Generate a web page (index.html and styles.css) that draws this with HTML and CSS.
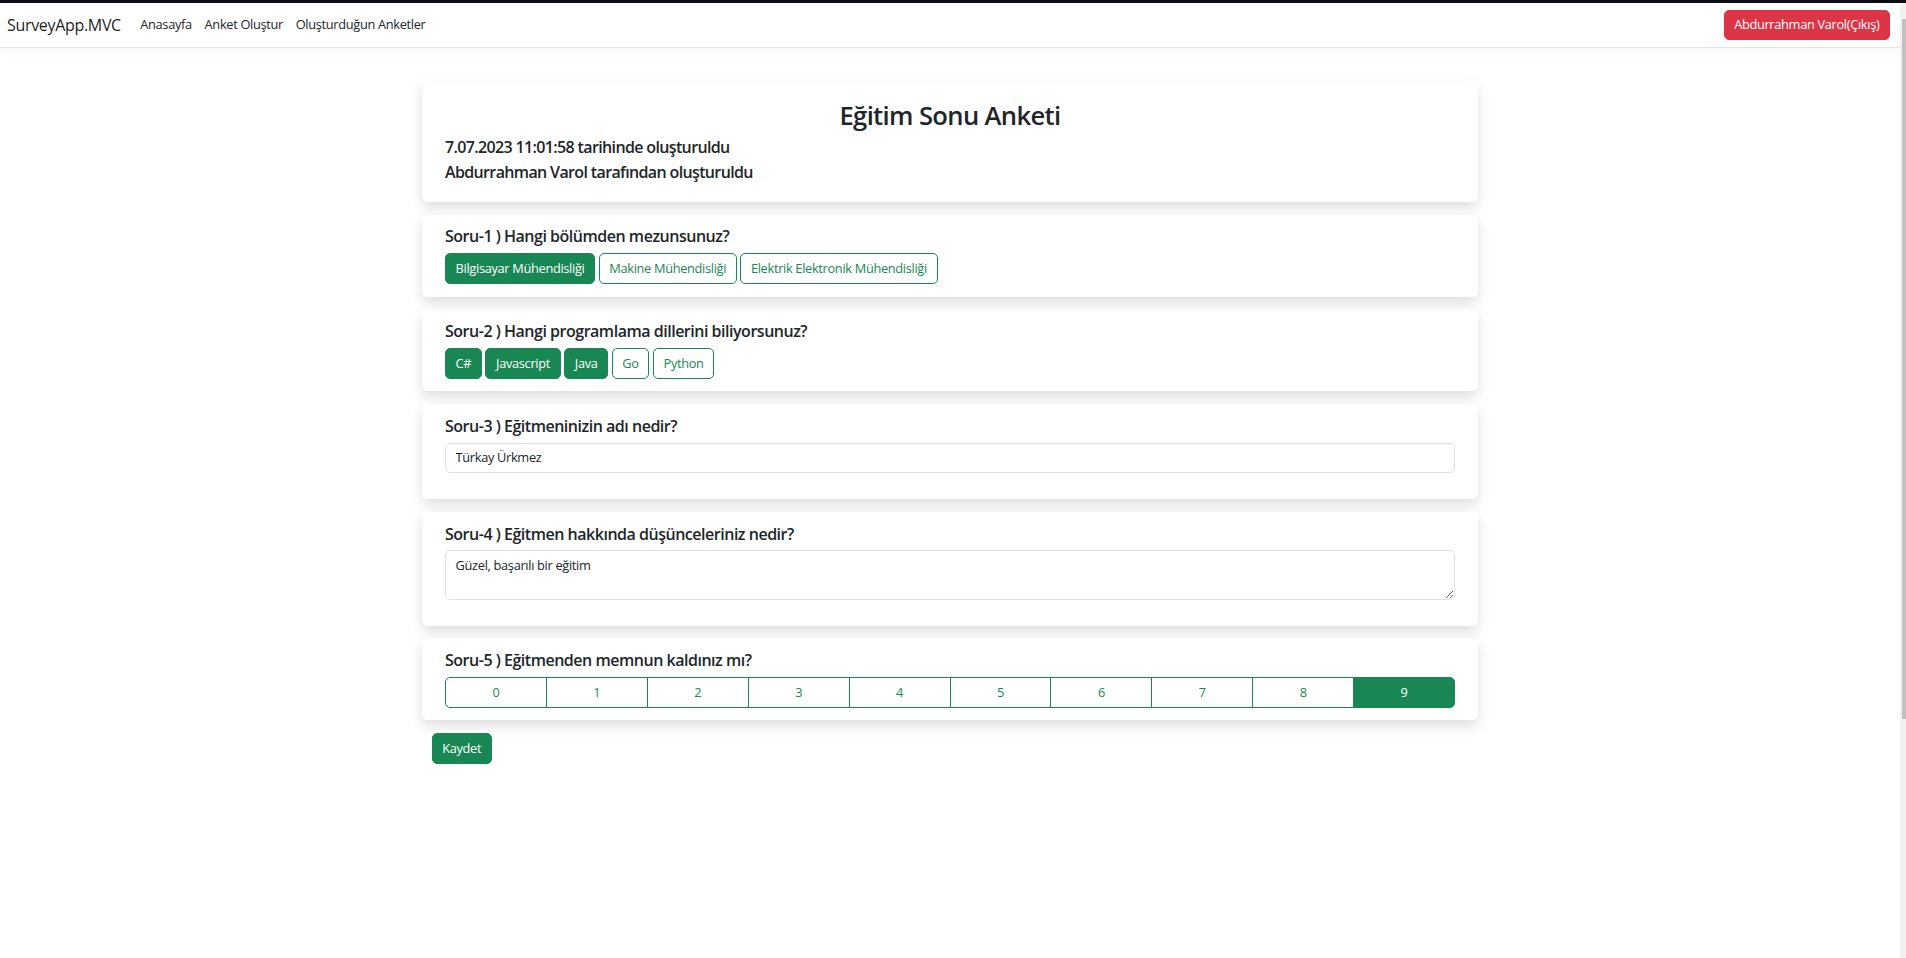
FILE: index.html
```html
<!DOCTYPE html>
<html lang="tr">
<head>
    <meta charset="UTF-8">
    <meta name="viewport" content="width=device-width, initial-scale=1.0">
    <title>Eğitim Sonu Anketi - SurveyApp.MVC</title>

    <link rel="stylesheet" href="styles.css">
</head>
<body>

    <div class="topline"></div>

    <div class="window">
        <div class="page">

            <!-- üst menü -->
            <header class="navbar">
                <a class="navbar-brand" href="#">SurveyApp.MVC</a>
                <nav class="nav-links">
                    <a href="#">Anasayfa</a>
                    <a href="#">Anket Oluştur</a>
                    <a href="#">Oluşturduğun Anketler</a>
                </nav>
                <a class="btn btn-danger logout" href="#">Abdurrahman Varol(Çıkış)</a>
            </header>

            <main class="container">
                <form class="survey">

                    <!-- anket başlığı -->
                    <div class="card card-head">
                        <h2 class="survey-title">Eğitim Sonu Anketi</h2>
                        <h5 class="meta">7.07.2023 11:01:58 tarihinde oluşturuldu</h5>
                        <h5 class="meta">Abdurrahman Varol tarafından oluşturuldu</h5>
                    </div>

                    <!-- tek seçim -->
                    <div class="card">
                        <h5 class="question">Soru-1 ) Hangi bölümden mezunsunuz?</h5>
                        <div class="options">
                            <button type="button" class="btn btn-success">Bilgisayar Mühendisliği</button>
                            <button type="button" class="btn btn-outline-success">Makine Mühendisliği</button>
                            <button type="button" class="btn btn-outline-success">Elektrik Elektronik Mühendisliği</button>
                        </div>
                    </div>

                    <!-- çoklu seçim -->
                    <div class="card">
                        <h5 class="question">Soru-2 ) Hangi programlama dillerini biliyorsunuz?</h5>
                        <div class="options">
                            <button type="button" class="btn btn-success">C#</button>
                            <button type="button" class="btn btn-success">Javascript</button>
                            <button type="button" class="btn btn-success">Java</button>
                            <button type="button" class="btn btn-outline-success">Go</button>
                            <button type="button" class="btn btn-outline-success">Python</button>
                        </div>
                    </div>

                    <!-- kısa metin -->
                    <div class="card">
                        <h5 class="question">Soru-3 ) Eğitmeninizin adı nedir?</h5>
                        <input class="form-control field" type="text" value="Türkay Ürkmez">
                    </div>

                    <!-- uzun metin -->
                    <div class="card">
                        <h5 class="question">Soru-4 ) Eğitmen hakkında düşünceleriniz nedir?</h5>
                        <textarea class="form-control field" rows="2">Güzel, başarılı bir eğitim</textarea>
                    </div>

                    <!-- puanlama -->
                    <div class="card">
                        <h5 class="question">Soru-5 ) Eğitmenden memnun kaldınız mı?</h5>
                        <div class="btn-group">
                            <button type="button" class="btn btn-outline-success">0</button>
                            <button type="button" class="btn btn-outline-success">1</button>
                            <button type="button" class="btn btn-outline-success">2</button>
                            <button type="button" class="btn btn-outline-success">3</button>
                            <button type="button" class="btn btn-outline-success">4</button>
                            <button type="button" class="btn btn-outline-success">5</button>
                            <button type="button" class="btn btn-outline-success">6</button>
                            <button type="button" class="btn btn-outline-success">7</button>
                            <button type="button" class="btn btn-outline-success">8</button>
                            <button type="button" class="btn btn-success">9</button>
                        </div>
                    </div>

                    <div class="actions">
                        <button type="submit" class="btn btn-success">Kaydet</button>
                    </div>
                </form>
            </main>
        </div>

        <!-- kaydırma çubuğu -->
        <div class="scrollbar"><div class="thumb"></div></div>
    </div>

</body>
</html>
```

FILE: styles.css
```css
/* genel */
* {
    box-sizing: border-box;
}

html, body {
    margin: 0;
    height: 100%;
}

body {
    font-family: "Open Sans", "Noto Sans", sans-serif;
    font-size: 12.8px;
    line-height: 1.5;
    letter-spacing: -0.025em;
    color: #212529;
    background-color: #fff;
    overflow: hidden;
}

.topline {
    height: 3px;
    background-color: #0d0d14;
}

.window {
    display: flex;
    height: calc(100% - 3px);
}

.page {
    flex: 1;
    min-width: 0;
}

.scrollbar {
    width: 6px;
    background-color: #f1f1f1;
    padding: 16px 0 0 2px;
}

.scrollbar .thumb {
    height: 700px;
    background-color: #c1c1c1;
}

/* üst menü */
.navbar {
    display: flex;
    align-items: center;
    height: 45px;
    padding: 0 10px 0 7px;
    border-bottom: 1px solid #e3e5e8;
    box-shadow: 0 3px 10px rgba(0, 0, 0, 0.04);
}

.navbar-brand {
    font-size: 16px;
    color: rgba(0, 0, 0, 0.9);
    text-decoration: none;
    margin-right: 13px;
}

.nav-links {
    display: flex;
    flex: 1;
}

.nav-links a {
    padding: 6.4px;
    color: #212529;
    text-decoration: none;
}

/* butonlar */
.btn {
    display: inline-block;
    font-family: inherit;
    font-size: 12.8px;
    letter-spacing: inherit;
    line-height: 19.2px;
    padding: 4.8px 9.6px;
    border: 1px solid transparent;
    border-radius: 5px;
    text-decoration: none;
    text-align: center;
    cursor: pointer;
    background: none;
}

.btn-danger {
    background-color: #dc3545;
    border-color: #dc3545;
    color: #fff;
}

.btn-success {
    background-color: #198754;
    border-color: #198754;
    color: #fff;
}

.btn-outline-success {
    background-color: #fff;
    border-color: #198754;
    color: #198754;
}

/* içerik */
.container {
    width: 1056px;
    margin: 33px auto 0;
}

.card {
    background-color: #fff;
    border-radius: 5px;
    box-shadow: 0 6px 13px rgba(0, 0, 0, 0.13);
    padding: 12.8px 23px;
    margin-bottom: 12.8px;
}

.card-head {
    padding-top: 19.8px;
}

.survey-title {
    margin: 0 0 6.4px;
    font-size: 25.6px;
    font-weight: 600;
    line-height: 1.2;
    letter-spacing: -0.025em;
    text-align: center;
}

h5 {
    margin: 0 0 6.4px;
    font-size: 16px;
    font-weight: 600;
    line-height: 1.2;
    letter-spacing: -0.03em;
}

h5.meta {
    letter-spacing: -0.04em;
}

.options {
    font-size: 0;
}

.options .btn {
    margin-right: 3.6px;
}

.form-control {
    display: block;
    width: 100%;
    font-family: inherit;
    font-size: 12.8px;
    letter-spacing: inherit;
    line-height: 19.2px;
    padding: 4.8px 9.6px;
    color: #212529;
    border: 1px solid #dee2e6;
    border-radius: 5px;
    background-color: #fff;
}

.field {
    margin-bottom: 12.8px;
}

textarea.form-control {
    height: 50px;
    resize: vertical;
}

/* puanlama */
.btn-group {
    display: flex;
}

.btn-group .btn {
    flex: 1;
    border-radius: 0;
}

.btn-group .btn + .btn {
    margin-left: -1px;
}

.btn-group .btn:first-child {
    border-radius: 5px 0 0 5px;
}

.btn-group .btn:last-child {
    border-radius: 0 5px 5px 0;
}

.actions {
    padding: 0 9.6px;
}
```
